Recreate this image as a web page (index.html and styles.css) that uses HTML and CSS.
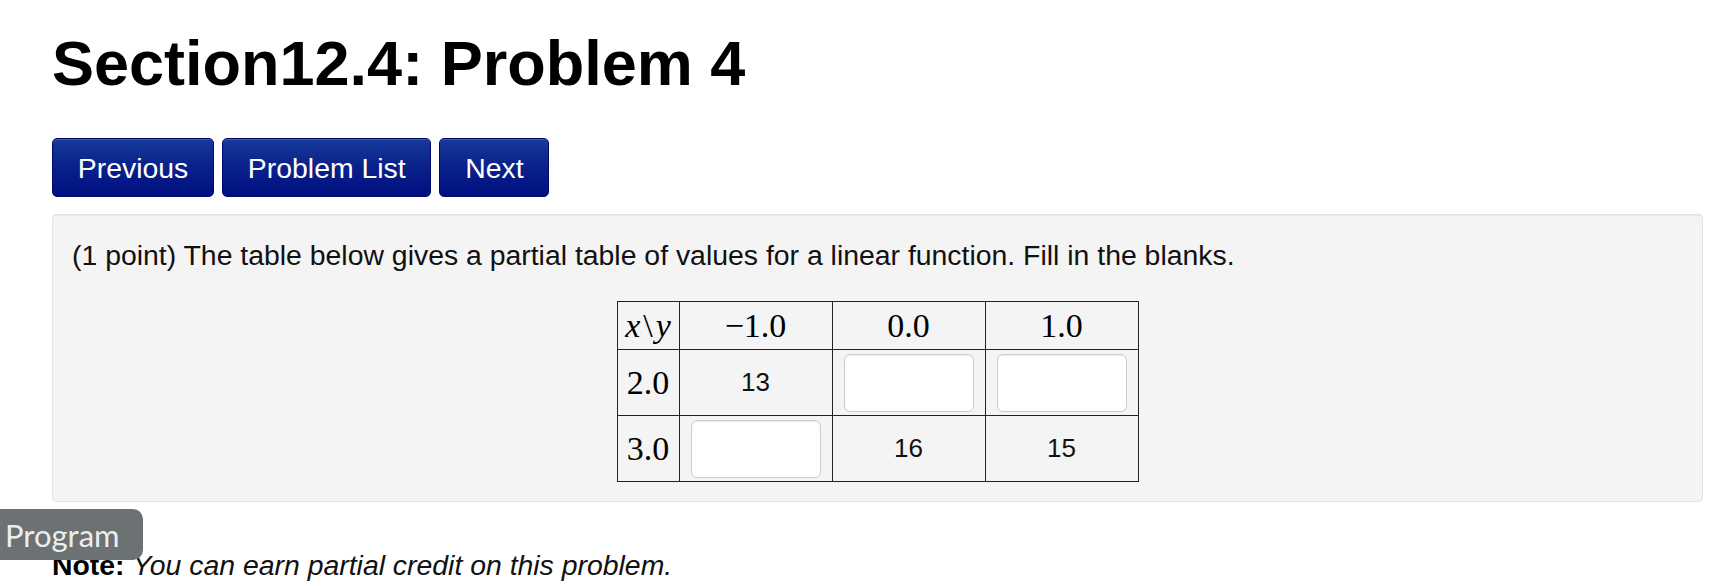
FILE: index.html
```html
<!DOCTYPE html>
<html lang="en">
<head>
<meta charset="utf-8">
<title>Section12.4: Problem 4</title>
<link rel="stylesheet" href="styles.css">
</head>
<body>
<div class="page">
  <h1 class="title">Section12.4: Problem 4</h1>
  <nav class="nav">
    <a class="btn" href="#">Previous</a>
    <a class="btn" href="#">Problem List</a>
    <a class="btn" href="#">Next</a>
  </nav>
  <div class="well">
    <p class="prompt">(1 point) The table below gives a partial table of values for a linear function. Fill in the blanks.</p>
    <table class="values">
      <colgroup>
        <col class="col-label">
        <col class="col-val">
        <col class="col-val">
        <col class="col-val">
      </colgroup>
      <tr class="row-head">
        <td class="math"><i>x</i><span class="bs">\</span><i>y</i></td>
        <td class="math">&minus;1.0</td>
        <td class="math">0.0</td>
        <td class="math">1.0</td>
      </tr>
      <tr class="row-data">
        <td class="math">2.0</td>
        <td class="num">13</td>
        <td class="cell-input"><input class="answer" type="text"></td>
        <td class="cell-input"><input class="answer" type="text"></td>
      </tr>
      <tr class="row-data">
        <td class="math">3.0</td>
        <td class="cell-input"><input class="answer" type="text"></td>
        <td class="num">16</td>
        <td class="num">15</td>
      </tr>
    </table>
  </div>
  <p class="note"><b>Note:</b> <i>You can earn partial credit on this problem.</i></p>
</div>
<div class="program-tab">Program</div>
</body>
</html>
```

FILE: styles.css
```css
html, body {
  margin: 0;
  padding: 0;
  background: #ffffff;
}

body {
  font-family: "Liberation Sans", Arial, sans-serif;
  color: #111;
  font-size: 28.4px;
}

.page {
  padding: 0 25px 0 52px;
}

.title {
  font-family: "Liberation Sans", Arial, sans-serif;
  font-weight: bold;
  font-size: 63px;
  line-height: 70px;
  margin: 28px 0 40px 0;
  color: #000;
}

.nav {
  display: flex;
  gap: 8px;
  margin-bottom: 17px;
}

.btn {
  display: block;
  height: 59px;
  box-sizing: border-box;
  padding: 0 24.8px;
  line-height: 59px;
  border: 1px solid #00086a;
  border-radius: 5px;
  background: linear-gradient(to bottom, #17399a 0%, #0a238c 45%, #000e80 100%);
  box-shadow: inset 0 1px 0 rgba(255, 255, 255, 0.18);
  color: #ffffff;
  text-decoration: none;
  font-size: 28.4px;
}

.well {
  background: #f4f4f4;
  border: 1px solid #e3e3e3;
  border-radius: 4px;
  box-shadow: inset 0 1px 1px rgba(0, 0, 0, 0.05);
  padding: 19px;
}

.prompt {
  margin: 0 0 25px 0;
  line-height: 42px;
}

.values {
  margin: 0 auto;
  border-collapse: collapse;
  table-layout: fixed;
  width: 521px;
}

.col-label {
  width: 62px;
}

.col-val {
  width: 153px;
}

.values td {
  border: 1px solid #222;
  text-align: center;
  vertical-align: middle;
  padding: 3px 0;
}

.row-head td {
  height: 41px;
}

.row-data td {
  height: 59px;
}

.math {
  font-family: "Liberation Serif", "Times New Roman", serif;
  font-size: 34px;
  color: #000;
}

.bs {
  display: inline-block;
  margin: 0 3px;
}

.num {
  font-size: 26px;
}

.cell-input {
  padding: 3px 11px;
}

.answer {
  display: block;
  box-sizing: border-box;
  width: 130px;
  height: 58px;
  margin: 0 auto;
  border: 1px solid #cccccc;
  border-radius: 6px;
  background: #ffffff;
  box-shadow: inset 0 1px 1px rgba(0, 0, 0, 0.075);
  font-size: 25px;
}

.note {
  margin: 42px 0 0 0;
  line-height: 42px;
}

.note b {
  color: #000;
}

.program-tab {
  position: fixed;
  left: 0;
  top: 509px;
  width: 143px;
  height: 51px;
  box-sizing: border-box;
  padding: 6px 0 0 5px;
  line-height: 40px;
  background: #6c7173;
  color: #eceeee;
  font-family: Lato, "Open Sans", sans-serif;
  font-size: 31px;
  border-radius: 0 10px 10px 0;
}
```
